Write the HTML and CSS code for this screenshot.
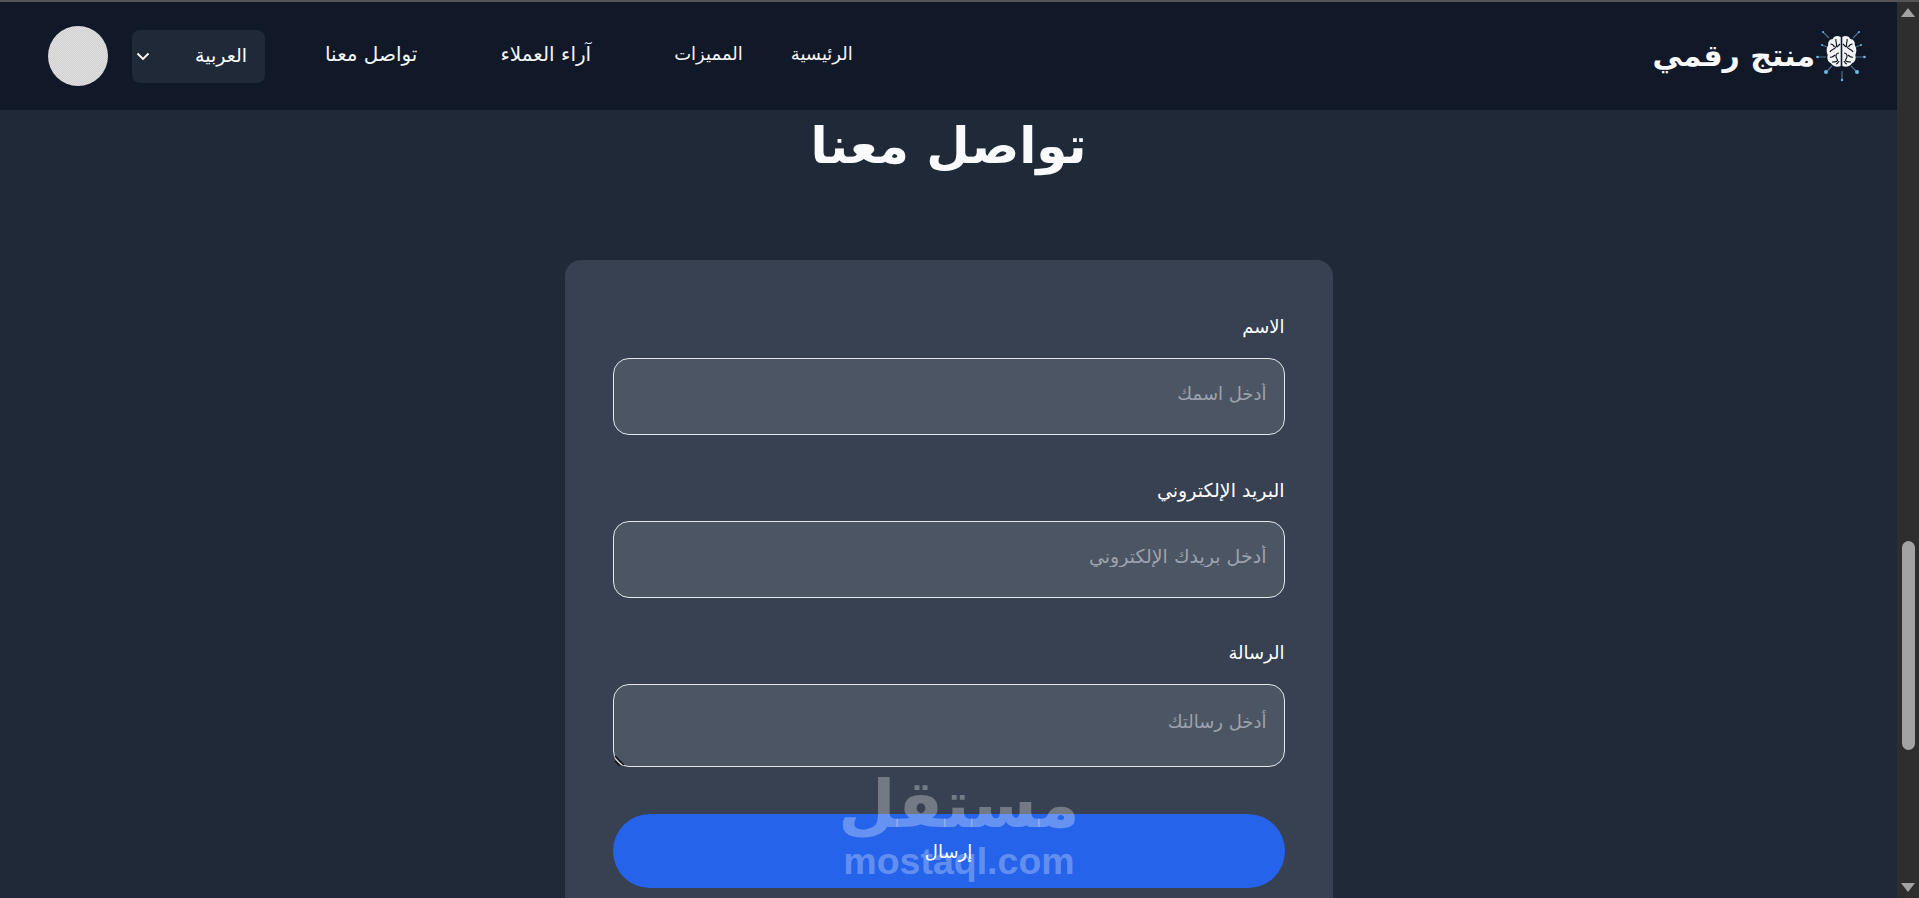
FILE: index.html
```html
<!DOCTYPE html>
<html lang="ar" dir="rtl">
<head>
  <meta charset="UTF-8">
  <title>منتج رقمي</title>
  <link rel="stylesheet" href="styles.css">
</head>
<body>
  <div class="window">
    <div class="page">
      <header class="topbar">
        <a class="brand" href="#">
          <svg class="brand-icon" viewBox="0 0 52 52" width="52" height="52" aria-hidden="true">
            <g stroke="#4f6f8f" stroke-width="1.2" fill="none">
              <path d="M7 2l6 6M43 2l-6 6M6 15l5 2M45 15l-5 2M1 27h9M49 27h-9M26 50v-9M10 42l6-6M41 42l-6-6"/>
            </g>
            <g fill="#6bb8ea">
              <circle cx="7" cy="2" r="1"/><circle cx="43" cy="2" r="1"/>
              <circle cx="6" cy="15" r="1"/><circle cx="45" cy="15" r="1"/>
              <circle cx="1.5" cy="27" r="1.3"/><circle cx="48.5" cy="27" r="1.3"/>
              <circle cx="26" cy="50" r="1.2"/>
              <circle cx="10" cy="42" r="2"/><circle cx="41" cy="42" r="2"/>
            </g>
            <path fill="#f3f4f6" d="M24.700 7c-3-2-7-1-8 2-3 0-5 3-4.500 6-2 3-2 7-.5 10-1 3 0 7 3 8 2 3 6 5 10 3z"/>
            <path fill="#f3f4f6" d="M26.300 7c3-2 7-1 8 2 3 0 5 3 4.500 6 2 3 2 7 .5 10 1 3 0 7-3 8-2 3-6 5-10 3z"/>
            <g stroke="#111827" stroke-width="1.200" fill="none">
              <path d="M20 9c-1 3 2 5 0 8s-5 2-6 5M14.500 14c2 0 3 1 4 3M23 23c-3 0-4 3-2 6s-3 3-5 3M24 14l-3 3M14 27c2 1 3 0 5-2M23 31c-1 2-2 3-3 3"/>
              <path d="M31 9c1 3-2 5 0 8s5 2 6 5M36.500 14c-2 0-3 1-4 3M28 23c3 0 4 3 2 6s3 3 5 3M27 14l3 3M37 27c-2 1-3 0-5-2M28 31c1 2 2 3 3 3"/>
            </g>
          </svg>
          <span class="brand-name">منتج رقمي</span>
        </a>
        <nav class="nav">
          <a class="nav-link" href="#">الرئيسية</a>
          <a class="nav-link nav-link-wide" href="#">المميزات</a>
          <a class="nav-link nav-link-wide nav-link-big" href="#">آراء العملاء</a>
          <a class="nav-link nav-link-big" href="#">تواصل معنا</a>
        </nav>
        <div class="tools">
          <div class="lang">
            <span class="lang-name">العربية</span>
            <svg class="chevron" viewBox="0 0 14 14" width="14" height="14" aria-hidden="true">
              <path d="M1.500 4.500L7 10l5.500-5.500" fill="none" stroke="#fff" stroke-width="1.800"/>
            </svg>
          </div>
          <div class="avatar"></div>
        </div>
      </header>

      <main class="contact">
        <h1 class="contact-title">تواصل معنا</h1>
        <form class="card">
          <div class="field">
            <label for="name">الاسم</label>
            <input id="name" type="text" placeholder="أدخل اسمك">
          </div>
          <div class="field field-email">
            <label for="email">البريد الإلكتروني</label>
            <input id="email" type="text" placeholder="أدخل بريدك الإلكتروني">
          </div>
          <div class="field">
            <label for="message">الرسالة</label>
            <textarea id="message" placeholder="أدخل رسالتك"></textarea>
            <svg class="grip" viewBox="0 0 12 11" width="12" height="11" aria-hidden="true">
              <path d="M1 1l9 9" stroke="#111" stroke-width="1.300"/>
              <path d="M1 3.500l7 7" stroke="#ddd" stroke-width="1"/>
              <path d="M1 6l5 5" stroke="#111" stroke-width="1.300"/>
            </svg>
          </div>
          <button class="send" type="button">إرسال</button>
        </form>
      </main>
      <div class="watermark">
        <span class="watermark-ar">مستقل</span>
        <span class="watermark-en">mostaql.com</span>
      </div>
    </div>
    <div class="scrollbar">
      <span class="arrow arrow-up"></span>
      <span class="thumb"></span>
      <span class="arrow arrow-down"></span>
    </div>
  </div>
</body>
</html>
```

FILE: styles.css
```css
:root {
  --dark: #111827;
  --bg: #1f2937;
  --card: #374151;
  --input: #4b5563;
  --blue: #2563eb;
  --font: "DejaVu Sans", "Liberation Sans", sans-serif;
}

* {
  box-sizing: border-box;
  margin: 0;
  padding: 0;
}

html, body {
  height: 898px;
  overflow: hidden;
}

body {
  font-family: var(--font);
  color: #fff;
  background: var(--bg);
  border-top: 2px solid #555;
}

.window {
  display: flex;
  flex-direction: row-reverse;
  height: 896px;
}

.page {
  flex: 1;
  position: relative;
  overflow: hidden;
}

.topbar {
  display: flex;
  align-items: center;
  height: 108px;
  padding: 0 29px 0 48px;
  background: var(--dark);
}

.brand {
  display: flex;
  align-items: center;
  gap: 1px;
  color: #f9fafb;
  text-decoration: none;
}

.brand-icon {
  flex: none;
}

.brand-name {
  padding-bottom: 2px;
  font-size: 30px;
  font-weight: 700;
}

.nav {
  display: flex;
  align-items: center;
  gap: 48px;
  margin-right: auto;
  margin-left: 60px;
  padding-bottom: 5px;
}

.nav-link {
  font-size: 18px;
  color: #f3f4f6;
  text-decoration: none;
}

.nav-link-big {
  font-size: 20px;
}

.nav-link-wide {
  padding-left: 35px;
}

.tools {
  display: flex;
  align-items: center;
  gap: 24px;
}

.lang {
  display: flex;
  align-items: center;
  justify-content: space-between;
  width: 133px;
  height: 53px;
  padding: 0 18px 0 4px;
  background: var(--bg);
  border-radius: 8px;
}

.lang-name {
  padding-bottom: 2px;
  font-size: 19px;
}

.avatar {
  width: 60px;
  height: 60px;
  border-radius: 50%;
  background: repeating-conic-gradient(#cfcfcf 0 25%, #e2e2e2 0 50%) 0 0 / 2px 2px;
}

.contact-title {
  font-size: 50px;
  line-height: 72px;
  font-weight: 700;
  text-align: center;
  color: #f9fafb;
}

.card {
  width: 768px;
  margin: 78px auto 0;
  padding: 48px;
  background: var(--card);
  border-radius: 16px;
}

.field {
  position: relative;
  display: flex;
  flex-direction: column;
  margin-bottom: 36px;
}

.field label {
  height: 28px;
  margin-top: 5px;
  margin-bottom: 17px;
  font-size: 18px;
  line-height: 28px;
}

.field input,
.field textarea {
  display: block;
  width: 100%;
  font: inherit;
  font-size: 18px;
  color: #fff;
  background: var(--input);
  border: 1px solid #e5e7eb;
  border-radius: 16px;
}

.field input {
  height: 77px;
  padding: 0 17px 7px;
}

.field textarea {
  height: 83px;
  padding: 26px 17px 0;
  resize: none;
}

.field input::placeholder,
.field textarea::placeholder {
  color: #9ca3af;
}

.field-email label,
.field-email input {
  font-size: 19px;
}

.field:last-of-type {
  margin-bottom: 0;
}

.grip {
  position: absolute;
  left: 1px;
  bottom: 1px;
}

.send {
  display: block;
  width: 100%;
  height: 74px;
  margin-top: 47px;
  font: inherit;
  font-size: 18px;
  color: #fff;
  background: var(--blue);
  border: 0;
  border-radius: 37px;
}

.watermark {
  position: absolute;
  left: 843px;
  top: 765px;
  display: flex;
  flex-direction: column;
  align-items: center;
  width: 232px;
  color: rgba(255, 255, 255, 0.3);
  font-weight: 700;
  pointer-events: none;
}

.watermark-ar {
  font-size: 66px;
  line-height: 76px;
}

.watermark-en {
  font-family: "Liberation Sans", sans-serif;
  font-size: 37.500px;
  line-height: 36px;
}

.scrollbar {
  display: flex;
  flex-direction: column;
  align-items: center;
  width: 22px;
  height: 896px;
  background: #2e2e2e;
  padding: 6px 0;
}

.arrow {
  width: 0;
  height: 0;
  border-left: 7px solid transparent;
  border-right: 7px solid transparent;
}

.arrow-up {
  border-bottom: 9px solid #a3a3a3;
}

.arrow-down {
  margin-top: auto;
  border-top: 9px solid #a3a3a3;
}

.thumb {
  width: 13px;
  height: 209px;
  margin-top: 524px;
  background: #a3a3a3;
  border-radius: 7px;
}
```
